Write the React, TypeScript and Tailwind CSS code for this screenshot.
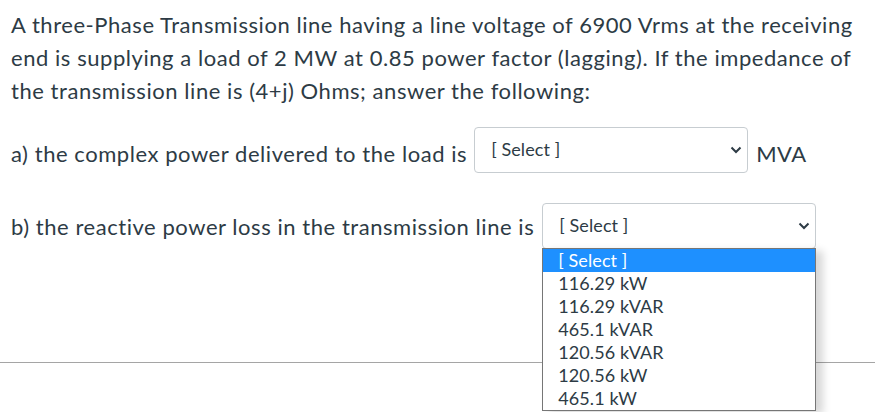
import React from "react";

const options = ["116.29 kW", "116.29 kVAR", "465.1 kVAR", "120.56 kVAR", "120.56 kW", "465.1 kW"];

function Chevron() {
  return (
    <svg width="12" height="8" viewBox="0 0 12 8" className="shrink-0">
      <path d="M1.5 1.5 L6 6 L10.5 1.5" fill="none" stroke="#2d3b45" strokeWidth="2" />
    </svg>
  );
}

function SelectBox() {
  return (
    <div className="w-[274px] h-[46px] shrink-0 border border-[#c7cdd1] rounded-[4px] bg-white flex items-center justify-between pl-[16px] pr-[5px]">
      <span className="text-[18px] leading-none tracking-[0.1px] text-[#2d3b45] -mt-[2px]">[ Select ]</span>
      <Chevron />
    </div>
  );
}

export default function App() {
  return (
    <div
      className="w-[875px] h-[412px] bg-white text-[#2d3b45] overflow-hidden relative"
      style={{ fontFamily: "Lato, 'Open Sans', sans-serif" }}
    >
      <div className="pl-[11px] pt-[8px] text-[22px] leading-[33px] tracking-[0.55px]">
        <p className="whitespace-nowrap">
          A three-Phase Transmission line having a line voltage of 6900 Vrms at the receiving
          <br />
          end is supplying a load of 2 MW at 0.85 power factor (lagging). If the impedance of
          <br />
          the transmission line is (4+j) Ohms; answer the following:
        </p>

        {/* part a */}
        <div className="flex items-start gap-[7px] mt-[20px]">
          <span className="mt-[10px] whitespace-nowrap">a) the complex power delivered to the load is</span>
          <SelectBox />
          <span className="mt-[10px] ml-[1px]">MVA</span>
        </div>

        {/* part b */}
        <div className="flex items-start gap-[8px] mt-[30px]">
          <span className="mt-[7px] whitespace-nowrap">b) the reactive power loss in the transmission line is</span>
          <div className="relative">
            <SelectBox />
            {/* open dropdown list */}
            <div className="absolute left-0 top-[45px] w-[274px] z-10 bg-white border border-[#767676] shadow-[7px_3px_8px_rgba(0,0,0,0.16)] text-[18px] tracking-[0.1px]">
              <div className="h-[23px] bg-[#1e90ff] text-white pl-[15px] leading-[23px]">[ Select ]</div>
              {options.map((o) => (
                <div key={o} className="h-[23px] pl-[15px] leading-[23px]">
                  {o}
                </div>
              ))}
            </div>
          </div>
        </div>
      </div>

      <hr className="mt-[113px] border-0 border-t border-[#a5a5a5]" />
    </div>
  );
}
